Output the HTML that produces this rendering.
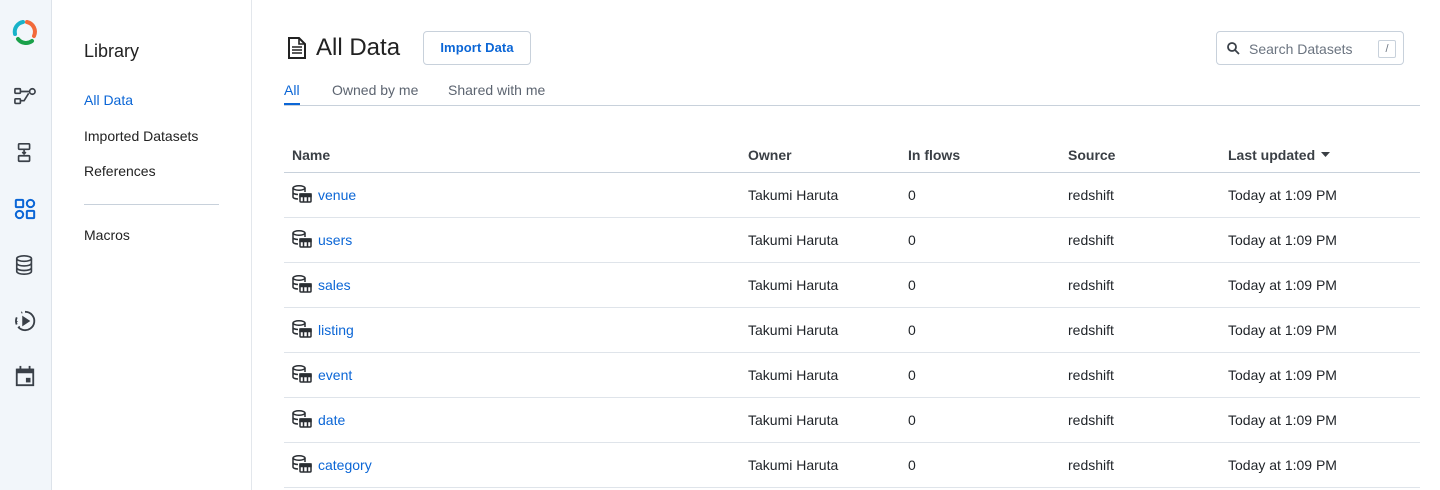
<!DOCTYPE html>
<html><head><meta charset="utf-8"><style>
*{box-sizing:border-box;margin:0;padding:0}
body{width:1440px;height:490px;overflow:hidden;background:#fff;font-family:"Liberation Sans",sans-serif;color:#1f2328;position:relative}
.rail{position:absolute;left:0;top:0;width:52px;height:490px;background:#f2f6fa;border-right:1px solid #dde3ea}
.rail svg{position:absolute;left:14px}
.lib{position:absolute;left:52px;top:0;width:200px;height:490px;border-right:1px solid #e3e7ec}
.lib h2{position:absolute;left:32px;top:41px;font-size:18px;font-weight:normal;color:#222}
.lib a{position:absolute;left:32px;font-size:14px;color:#222}
.main{position:absolute;left:284px;top:0;width:1136px}
.title{position:absolute;left:32px;top:34px;font-size:24px;color:#222}
.btn{position:absolute;left:139px;top:31px;width:108px;height:34px;border:1px solid #c8d1db;border-radius:4px;color:#0b66d6;font-weight:bold;font-size:13px;text-align:center;line-height:32px;letter-spacing:.1px}
.search{position:absolute;left:932px;top:31px;width:188px;height:34px;border:1px solid #c8d1db;border-radius:4px;font-size:14px;color:#6b7480}
.tabs{position:absolute;left:0;top:80px;width:1136px;height:26px;border-bottom:1px solid #c8d1db;font-size:14px;color:#5c6470}
.tabs span{position:absolute;top:2px}
.tbl{position:absolute;left:0;top:137px;width:1136px;font-size:14px}
.row{position:relative;height:45px;border-bottom:1px solid #dfe4ea}
.hd{height:36px;border-bottom:1px solid #c8d1db;font-weight:bold;color:#3a3f45}
.row span{position:absolute;top:14px}
.hd span{top:10px}
.n{left:34px;color:#0b66d6}
</style></head><body>
<div class="rail">
<svg style="left:10px;top:17px" width="30" height="30" viewBox="0 0 30 30"><path d="M5 17 A10 10 0 0 1 13 5" stroke="#19b3c9" stroke-width="4" fill="none" stroke-linecap="round"/><path d="M17 5 A10 10 0 0 1 24 19" stroke="#f26a3a" stroke-width="4" fill="none" stroke-linecap="round"/><path d="M22 24 A10 10 0 0 1 8 22" stroke="#1aa14a" stroke-width="4" fill="none" stroke-linecap="round"/></svg>
<svg style="top:86px" width="22" height="22" viewBox="0 0 24 24" fill="none" stroke="#3a4048" stroke-width="1.8"><rect x="1" y="3" width="6" height="5" rx="1"/><rect x="1" y="14" width="6" height="5" rx="1"/><circle cx="20" cy="6" r="3"/><path d="M7 6h10M7 16h4l5-8"/></svg>
<svg style="top:141px" width="22" height="24" viewBox="0 0 24 24" fill="none" stroke="#3a4048" stroke-width="1.8"><rect x="5" y="2" width="12" height="6" rx="1"/><rect x="5" y="15" width="12" height="6" rx="1"/><path d="M11 8v5M9 11l2 2 2-2"/></svg>
<svg style="top:198px" width="22" height="22" viewBox="0 0 24 24" fill="none" stroke="#0b66d6" stroke-width="2.2"><rect x="2" y="2" width="8" height="8" rx="1"/><circle cx="18" cy="6" r="4"/><circle cx="6" cy="18" r="4"/><rect x="14" y="14" width="8" height="8" rx="1"/></svg>
<svg style="top:254px" width="22" height="22" viewBox="0 0 24 24" fill="none" stroke="#3a4048" stroke-width="1.8"><ellipse cx="11" cy="5" rx="8" ry="3"/><path d="M3 5v14c0 2 4 3 8 3s8-1 8-3V5M3 10c0 2 4 3 8 3s8-1 8-3M3 15c0 2 4 3 8 3s8-1 8-3"/></svg>
<svg style="top:310px" width="22" height="22" viewBox="0 0 24 24" fill="none" stroke="#3a4048" stroke-width="2"><path d="M12 2a10 10 0 1 1-9 6" stroke-dasharray="40 3"/><path d="M3 12v1M5 18l1 1M9 2.5l-1 .5"/><path d="M10 8l6 4-6 4z" fill="#3a4048"/></svg>
<svg style="top:365px" width="22" height="22" viewBox="0 0 24 24"><path d="M3 5h18v17H3z" fill="none" stroke="#3a4048" stroke-width="2"/><rect x="3" y="4" width="18" height="5" fill="#3a4048"/><rect x="6" y="1" width="2" height="4" fill="#3a4048"/><rect x="16" y="1" width="2" height="4" fill="#3a4048"/><rect x="13" y="14" width="5" height="5" fill="#3a4048"/></svg>
</div>
<div class="lib"><h2>Library</h2>
<a style="top:92px;color:#0b66d6">All Data</a><a style="top:128px">Imported Datasets</a><a style="top:163px">References</a>
<div style="position:absolute;left:32px;top:204px;width:135px;border-top:1px solid #c8d1db"></div>
<a style="top:227px">Macros</a></div>
<div class="main">
<svg style="position:absolute;left:3px;top:37px" width="20" height="22" viewBox="0 0 20 22" fill="none" stroke="#222" stroke-width="2"><path d="M2 1h10l6 6v14H2z"/><path d="M12 1v6h6M5 10h10M5 13h10M5 16h10" stroke-width="1.6"/></svg>
<div class="title">All Data</div>
<div class="btn">Import Data</div>
<div class="search"><svg style="position:absolute;left:10px;top:10px" width="13" height="13" viewBox="0 0 13 13" fill="none" stroke="#3a4048" stroke-width="1.8"><circle cx="5" cy="5" r="4"/><path d="M8 8l4 4"/></svg><span style="position:absolute;left:32px;top:9px">Search Datasets</span><span style="position:absolute;left:161px;top:8px;width:18px;height:18px;border:1px solid #c8d1db;border-radius:2px;font-size:11px;text-align:center;line-height:16px">/</span></div>
<div class="tabs"><span style="left:0;color:#0b66d6">All</span><div style="position:absolute;left:0;top:23px;width:16px;height:2px;background:#0b66d6"></div><span style="left:48px">Owned by me</span><span style="left:164px">Shared with me</span></div>
<div class="tbl">
<div class="row hd"><span style="left:8px">Name</span><span style="left:464px">Owner</span><span style="left:624px">In flows</span><span style="left:784px">Source</span><span style="left:944px">Last updated <svg width="9" height="6" viewBox="0 0 9 6" style="vertical-align:2px;margin-left:2px"><path d="M0 0h9L4.5 5z" fill="#3a3f45"/></svg></span></div>
</div>
</div>
<script>
const names=["venue","users","sales","listing","event","date","category"];
const t=document.querySelector('.tbl');
const ic='<svg style="position:absolute;left:8px;top:12px" width="20" height="19" viewBox="0 0 20 19" fill="none" stroke="#2a2e33" stroke-width="1.5"><ellipse cx="7" cy="3" rx="6" ry="2.2"/><path d="M1 3v9c0 1 2 2 5 2M1 7.5c0 1 2 2 5 2M13 3v4"/><rect x="8" y="9" width="11" height="8" rx="1" fill="#fff"/><rect x="8" y="9" width="11" height="2.5" fill="#2a2e33"/><path d="M11.5 12v5M15.5 12v5"/></svg>';
names.forEach(n=>{t.insertAdjacentHTML('beforeend',`<div class="row">${ic}<span class="n">${n}</span><span style="left:464px">Takumi Haruta</span><span style="left:624px">0</span><span style="left:784px">redshift</span><span style="left:944px">Today at 1:09 PM</span></div>`)});
</script>
</body></html>
